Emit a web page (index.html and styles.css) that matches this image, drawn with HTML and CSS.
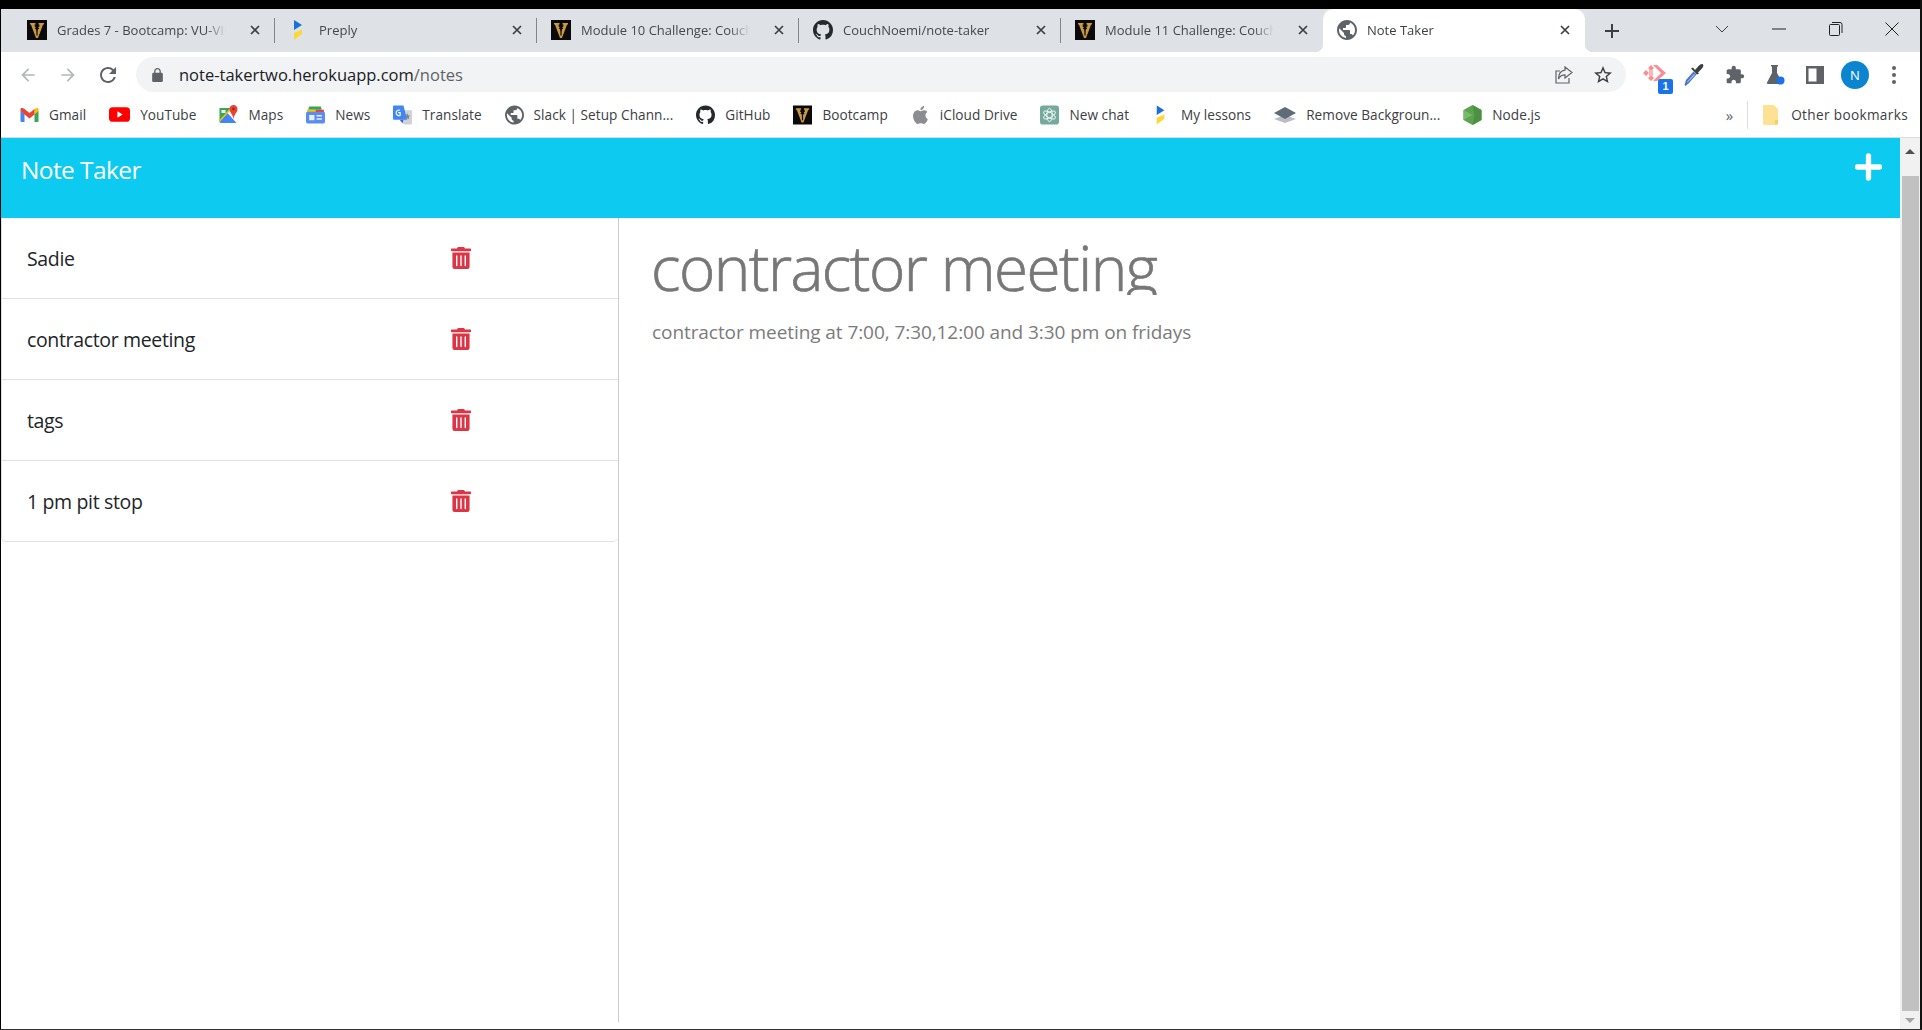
FILE: index.html
```html
<!DOCTYPE html>
<html lang="en">
<head>
<meta charset="utf-8">
<title>Note Taker</title>
<link rel="stylesheet" href="styles.css">
</head>
<body>
<svg class="sprite" xmlns="http://www.w3.org/2000/svg">
  <symbol id="i-v" viewBox="0 0 20 20"><rect width="20" height="20" fill="#0a0a0a"/><path d="M3 3h5.500v1.400H7.600L10 12l2.400-7.600h-.9V3H17v1.400h-.9L11 18H9L3.900 4.400H3z" fill="#c9983f"/><path d="M9.400 2.500h1.200v13h-1.200zM7.500 5.500h5v1h-5zM8 8h4v1H8z" fill="#0a0a0a"/></symbol>
  <symbol id="i-preply" viewBox="0 0 20 20"><path d="M5 0l8 5-8 5z" fill="#1a6fd8"/><path d="M13 9.500V14l-8 6v-7z" fill="#fdd835"/></symbol>
  <symbol id="i-gh" viewBox="0 0 16 16"><path fill="#24292e" d="M8 0C3.580 0 0 3.580 0 8c0 3.540 2.290 6.530 5.470 7.590.4.07.55-.17.55-.38 0-.19-.01-.82-.01-1.490-2.010.37-2.530-.49-2.690-.94-.09-.23-.48-.94-.82-1.130-.28-.15-.68-.52-.01-.53.63-.01 1.080.58 1.230.82.72 1.210 1.870.87 2.330.66.07-.52.28-.87.51-1.070-1.780-.2-3.640-.89-3.640-3.950 0-.87.31-1.590.82-2.150-.08-.2-.36-1.020.08-2.120 0 0 .67-.21 2.200.82.64-.18 1.320-.27 2-.27.68 0 1.360.09 2 .27 1.530-1.040 2.200-.82 2.200-.82.44 1.100.16 1.920.08 2.120.51.56.82 1.270.82 2.150 0 3.070-1.870 3.750-3.650 3.950.29.25.54.73.54 1.480 0 1.070-.01 1.930-.01 2.200 0 .21.15.46.55.38A8.013 8.013 0 0016 8c0-4.420-3.580-8-8-8z"/></symbol>
  <symbol id="i-globe" viewBox="2 2 20 20"><circle cx="12" cy="12" r="10" fill="#fff"/><path fill="#5f6368" d="M12 2C6.480 2 2 6.480 2 12s4.480 10 10 10 10-4.480 10-10S17.520 2 12 2zm-1 17.930c-3.950-.49-7-3.850-7-7.930 0-.62.08-1.210.21-1.790L9 15v1c0 1.100.9 2 2 2v1.930zm6.900-2.540c-.26-.81-1-1.390-1.900-1.390h-1v-3c0-.55-.45-1-1-1H8v-2h2c.55 0 1-.45 1-1V7h2c1.100 0 2-.9 2-2v-.41c2.930 1.190 5 4.060 5 7.410 0 2.080-.8 3.970-2.100 5.390z"/></symbol>
  <symbol id="i-x" viewBox="0 0 10 10"><path d="M1 1l8 8M9 1L1 9" stroke="#3c4043" stroke-width="1.700" fill="none"/></symbol>
  <symbol id="i-gmail" viewBox="0 0 18 14"><path d="M0 2.500V13a1 1 0 001 1h3V6z" fill="#4285f4"/><path d="M18 2.500V13a1 1 0 01-1 1h-3V6z" fill="#34a853"/><path d="M14 1l2-.9A1.300 1.300 0 0118 1.300v1.500L14 6.500z" fill="#fbbc04"/><path d="M4 6.500L0 2.800V1.300A1.300 1.300 0 012 .1L4 1l5 4 5-4v5.500l-5 4z" fill="#ea4335"/></symbol>
  <symbol id="i-yt" viewBox="0 0 20 14"><rect width="20" height="14" rx="3.500" fill="#f00"/><path d="M8 4l5 3-5 3z" fill="#fff"/></symbol>
  <symbol id="i-maps" viewBox="0 0 18 20"><path d="M0 3h11L0 17z" fill="#34a853"/><path d="M0 17l8-9 9 10H2a2 2 0 01-2-1z" fill="#4285f4"/><path d="M0 17L13 3l-2 0L0 15z" fill="#fbbc04"/><path d="M2 5h4v3H2z" fill="#fff"/><path d="M14 0a4 4 0 014 4.200c0 3-3.500 5-4 10-.5-5-4-7-4-10A4 4 0 0114 0z" fill="#ea4335"/><circle cx="14" cy="4" r="1.400" fill="#a52714"/></symbol>
  <symbol id="i-news" viewBox="0 0 18 18"><path d="M3 1h11l1 3H2z" fill="#34a853"/><path d="M1 4h8v3H1z" fill="#fbbc04"/><path d="M9 4h8v3H9z" fill="#ea4335"/><rect y="6" width="18" height="11" rx="1.500" fill="#5b8df0"/><path d="M3 9h5v5H3zM10 9h5v1.500h-5zM10 12h5v1.500h-5z" fill="#e8eefc"/></symbol>
  <symbol id="i-tr" viewBox="0 0 20 20"><path d="M8 5h11a1 1 0 011 1v13a1 1 0 01-1 1H11z" fill="#cfd3d8"/><path d="M1 0h10l4 15H1a1 1 0 01-1-1V1a1 1 0 011-1z" fill="#4285f4"/><path d="M11 15l-1 4-3-4z" fill="#3367d6"/><path d="M7.500 5a3 3 0 100 5.500V7.500H5.500" fill="none" stroke="#fff" stroke-width="1.200"/><path d="M15 8l1 2.400 2.400.2-1.800 1.600.6 2.400L15 13.300l-2.200 1.300.6-2.400-1.800-1.600 2.400-.2z" fill="#7c8794"/></symbol>
  <symbol id="i-apple" viewBox="3 1 18 22"><path fill="#8b8d90" d="M18.710 19.500c-.83 1.240-1.710 2.450-3.050 2.470-1.340.03-1.770-.79-3.290-.79-1.530 0-2 .77-3.270.82-1.310.05-2.300-1.320-3.140-2.530C4.250 17 2.940 12.450 4.700 9.390c.87-1.520 2.430-2.480 4.120-2.510 1.280-.02 2.500.87 3.290.87.78 0 2.260-1.070 3.800-.91.65.03 2.470.26 3.640 1.980-.09.06-2.170 1.280-2.150 3.810.03 3.020 2.650 4.030 2.680 4.040-.03.07-.42 1.440-1.380 2.830M13 3.500c.73-.83 1.940-1.460 2.940-1.500.13 1.170-.34 2.350-1.040 3.190-.69.85-1.830 1.510-2.950 1.420-.15-1.150.41-2.350 1.050-3.110z"/></symbol>
  <symbol id="i-gpt" viewBox="0 0 20 20"><rect width="20" height="20" rx="3" fill="#74aa9c"/><g fill="none" stroke="#fff" stroke-width=".9"><ellipse cx="10" cy="10" rx="2.800" ry="7"/><ellipse cx="10" cy="10" rx="2.800" ry="7" transform="rotate(60 10 10)"/><ellipse cx="10" cy="10" rx="2.800" ry="7" transform="rotate(120 10 10)"/></g></symbol>
  <symbol id="i-layers" viewBox="0 0 22 16"><path d="M11 8l11 4-11 4L0 12z" fill="#b9bdc2"/><path d="M11 0l11 6-11 6L0 6z" fill="#5f6b78"/></symbol>
  <symbol id="i-node" viewBox="0 0 18 20"><path d="M9 0l9 5v10l-9 5-9-5V5z" fill="#5ba34f"/><path d="M9 0l9 5v10l-9 5 2-10z" fill="#4c9142"/><path d="M0 5l9 5-9 5z" fill="#78bb6b"/></symbol>
  <symbol id="i-trash" viewBox="0 0 448 512" preserveAspectRatio="none"><path fill="#dc3545" d="M32 464a48 48 0 0 0 48 48h288a48 48 0 0 0 48-48V128H32zm272-256a16 16 0 0 1 32 0v224a16 16 0 0 1-32 0zm-96 0a16 16 0 0 1 32 0v224a16 16 0 0 1-32 0zm-96 0a16 16 0 0 1 32 0v224a16 16 0 0 1-32 0zM432 32H312l-9.400-18.700A24 24 0 0 0 281.100 0H166.800a23.720 23.720 0 0 0-21.400 13.300L136 32H16A16 16 0 0 0 0 48v32a16 16 0 0 0 16 16h416a16 16 0 0 0 16-16V48a16 16 0 0 0-16-16z"/></symbol>
</svg>

<div class="window">
  <div class="tabstrip">
    <div class="tab"><svg class="fav"><use href="#i-v"/></svg><span class="tab-title">Grades 7 - Bootcamp: VU-VIRT-FSF</span><svg class="tab-x"><use href="#i-x"/></svg></div>
    <div class="tab"><svg class="fav"><use href="#i-preply"/></svg><span class="tab-title">Preply</span><svg class="tab-x"><use href="#i-x"/></svg></div>
    <div class="tab"><svg class="fav"><use href="#i-v"/></svg><span class="tab-title">Module 10 Challenge: Couch</span><svg class="tab-x"><use href="#i-x"/></svg></div>
    <div class="tab"><svg class="fav"><use href="#i-gh"/></svg><span class="tab-title">CouchNoemi/note-taker</span><svg class="tab-x"><use href="#i-x"/></svg></div>
    <div class="tab tab-before-active"><svg class="fav"><use href="#i-v"/></svg><span class="tab-title">Module 11 Challenge: Couch</span><svg class="tab-x"><use href="#i-x"/></svg></div>
    <div class="tab tab-active"><svg class="fav"><use href="#i-globe"/></svg><span class="tab-title">Note Taker</span><svg class="tab-x"><use href="#i-x"/></svg></div>
    <svg class="newtab" viewBox="0 0 16 16"><path d="M8 1v14M1 8h14" stroke="#3c4043" stroke-width="2"/></svg>
    <div class="win-controls">
      <div class="win-btn"><svg viewBox="0 0 14 8" class="win-chev"><path d="M1 1l6 6 6-6" fill="none" stroke="#3c4043"/></svg></div>
      <div class="win-btn"><svg viewBox="0 0 14 14" class="win-ico"><path d="M0 7h14" stroke="#222" stroke-width="1"/></svg></div>
      <div class="win-btn"><svg viewBox="0 0 14 14" class="win-ico"><path d="M.5 3.500a1 1 0 011-1h8a1 1 0 011 1v9a1 1 0 01-1 1h-8a1 1 0 01-1-1zM3 .5h8a2 2 0 012 2V11" fill="none" stroke="#222"/></svg></div>
      <div class="win-btn win-close"><svg viewBox="0 0 14 14" class="win-ico"><path d="M.5.500l13 13M13.500.5l-13 13" stroke="#222"/></svg></div>
    </div>
  </div>

  <div class="toolbar">
    <button class="tool"><svg viewBox="0 0 24 24" class="ico20 dim"><path d="M20 11H7.830l5.590-5.590L12 4l-8 8 8 8 1.410-1.410L7.830 13H20v-2z"/></svg></button>
    <button class="tool"><svg viewBox="0 0 24 24" class="ico20 dim"><path d="M12 4l-1.410 1.410L16.170 11H4v2h12.170l-5.580 5.590L12 20l8-8z"/></svg></button>
    <button class="tool"><svg viewBox="0 0 24 24" class="ico24"><path d="M17.650 6.350A7.958 7.958 0 0 0 12 4c-4.420 0-7.990 3.580-7.990 8s3.570 8 7.990 8c3.730 0 6.840-2.550 7.730-6h-2.080A5.990 5.990 0 0 1 12 18c-3.310 0-6-2.690-6-6s2.690-6 6-6c1.660 0 3.140.69 4.220 1.780L13 11h7V4l-2.350 2.350z"/></svg></button>
    <div class="omnibox">
      <svg viewBox="4 1 16 21" class="lock"><path d="M18 8h-1V6c0-2.760-2.240-5-5-5S7 3.240 7 6v2H6c-1.100 0-2 .9-2 2v10c0 1.100.9 2 2 2h12c1.100 0 2-.9 2-2V10c0-1.100-.9-2-2-2zM9 6c0-1.660 1.340-3 3-3s3 1.340 3 3v2H9V6z"/></svg>
      <span class="url">note-takertwo.herokuapp.com<span class="url-path">/notes</span></span>
      <svg viewBox="0 0 20 20" class="share"><path d="M11 2l7 5.500L11 13V9.800C7.500 9.800 5.500 11.500 4.500 14c0-5 2.500-8.300 6.500-8.800zM15 13v5H2V6h4" fill="none" stroke="#5f6368" stroke-width="1.200"/></svg>
      <svg viewBox="2 2 20 20" class="star"><path d="M22 9.240l-7.190-.62L12 2 9.190 8.630 2 9.240l5.460 4.730L5.820 21 12 17.270 18.180 21l-1.630-7.030L22 9.240zM12 15.400l-3.760 2.270 1-4.280-3.320-2.880 4.380-.38L12 6.100l1.710 4.040 4.380.38-3.320 2.880 1 4.280L12 15.400z"/></svg>
    </div>
    <div class="ext ext-first">
      <svg viewBox="0 0 24 20" class="ext-svg"><path d="M0 9l3-3 3 3-3 3zM5 4l3-3 3 3-3 3zM5 14l3-3 3 3-3 3z" fill="#f98d93"/><path d="M10 1h4l9 8-9 8h-4l8-8z" fill="#f98d93"/><path d="M6 6h4v6H6z" fill="#fbb6ba"/></svg>
      <span class="badge">1</span>
    </div>
    <div class="ext ext-dropper"><svg viewBox="0 0 20 24" class="drop"><path d="M1.500 23L.5 22l1.500-5 7.500-8.500 3 3L5 20z" fill="#4a76c9"/><path d="M3.500 19.500L3 19l7-8 1 1z" fill="#a9c2ee"/><path d="M11 7l3.500-4C16 1.500 18 .5 19 1.500s0 3-1.500 4.500L14 9.500l1 1-2 1-6-6 2-1z" fill="#3c4043"/></svg></div>
    <div class="ext ext-puzzle"><svg viewBox="0 0 24 24" class="ico20"><path d="M20.500 11H19V7c0-1.100-.9-2-2-2h-4V3.500C13 2.120 11.880 1 10.500 1S8 2.120 8 3.500V5H4c-1.100 0-1.990.9-1.990 2v3.800H3.500c1.490 0 2.700 1.210 2.700 2.700s-1.210 2.700-2.700 2.700H2V20c0 1.100.9 2 2 2h3.800v-1.500c0-1.490 1.210-2.700 2.700-2.700 1.490 0 2.700 1.210 2.700 2.700V22H17c1.100 0 2-.9 2-2v-4h1.500c1.380 0 2.500-1.120 2.500-2.500S21.880 11 20.500 11z"/></svg></div>
    <div class="ext"><svg viewBox="0 0 20 20" class="ico20"><path d="M6 0h7v1.500h-1V8l5 9a1 1 0 01-1 2H3a1 1 0 01-1-1.500L7 8V1.500H6z"/><circle cx="15.500" cy="15.500" r="4" fill="#1a73e8"/></svg></div>
    <div class="ext"><svg viewBox="0 0 18 18" class="side"><path d="M0 0h18v18H0z" fill="#5f6368"/><path d="M2.500 2.500h8v13h-8z" fill="#fff"/></svg></div>
    <div class="ext"><span class="avatar">N</span></div>
    <div class="ext ext-dots"><svg viewBox="0 0 4 18" class="dots"><circle cx="2" cy="2" r="2"/><circle cx="2" cy="9" r="2"/><circle cx="2" cy="16" r="2"/></svg></div>
  </div>

  <div class="bookmarks">
    <a class="bm"><svg class="bm-ico bm-gmail"><use href="#i-gmail"/></svg>Gmail</a>
    <a class="bm"><svg class="bm-ico bm-yt"><use href="#i-yt"/></svg>YouTube</a>
    <a class="bm"><svg class="bm-ico"><use href="#i-maps"/></svg>Maps</a>
    <a class="bm"><svg class="bm-ico"><use href="#i-news"/></svg>News</a>
    <a class="bm"><svg class="bm-ico"><use href="#i-tr"/></svg>Translate</a>
    <a class="bm"><svg class="bm-ico"><use href="#i-globe"/></svg>Slack | Setup Chann...</a>
    <a class="bm"><svg class="bm-ico"><use href="#i-gh"/></svg>GitHub</a>
    <a class="bm"><svg class="bm-ico"><use href="#i-v"/></svg>Bootcamp</a>
    <a class="bm"><svg class="bm-ico"><use href="#i-apple"/></svg>iCloud Drive</a>
    <a class="bm"><svg class="bm-ico"><use href="#i-gpt"/></svg>New chat</a>
    <a class="bm"><svg class="bm-ico"><use href="#i-preply"/></svg>My lessons</a>
    <a class="bm"><svg class="bm-ico bm-layers"><use href="#i-layers"/></svg>Remove Backgroun...</a>
    <a class="bm"><svg class="bm-ico"><use href="#i-node"/></svg>Node.js</a>
    <span class="bm-more">»</span>
    <span class="bm-sep"></span>
    <a class="bm bm-other"><svg viewBox="0 0 16 20" class="bm-folder"><path d="M1 0h10l4 4v15a1 1 0 01-1 1H1a1 1 0 01-1-1V1a1 1 0 011-1z" fill="#fde293"/><path d="M12 15h3v4h-3z" fill="#f9cf5b"/></svg>Other bookmarks</a>
  </div>

  <div class="viewport">
    <div class="page">
      <header class="app-header">
        <h1 class="app-title">Note Taker</h1>
        <svg viewBox="0 0 28 28" class="plus"><path d="M14 2.500v23M2.500 14h23" stroke="#fff" stroke-width="5.500" stroke-linecap="round"/></svg>
      </header>
      <div class="app-body">
        <aside class="sidebar">
          <ul class="note-list">
            <li class="note"><span>Sadie</span><svg class="trash"><use href="#i-trash"/></svg></li>
            <li class="note"><span>contractor meeting</span><svg class="trash"><use href="#i-trash"/></svg></li>
            <li class="note"><span>tags</span><svg class="trash"><use href="#i-trash"/></svg></li>
            <li class="note"><span>1 pm pit stop</span><svg class="trash"><use href="#i-trash"/></svg></li>
          </ul>
        </aside>
        <main class="editor">
          <div class="note-heading">contractor meeting</div>
          <p class="note-text">contractor meeting at 7:00, 7:30,12:00 and 3:30 pm on fridays</p>
        </main>
      </div>
    </div>
    <div class="scrollbar">
      <span class="arrow-up"></span>
      <span class="thumb"></span>
      <span class="arrow-down"></span>
    </div>
  </div>
</div>
</body>
</html>
```

FILE: styles.css
```css
* { box-sizing: border-box; }
html, body { margin: 0; height: 100%; overflow: hidden; background: #000; }
body { font-family: "Open Sans", "Liberation Sans", sans-serif; }
.sprite { display: none; }
svg { display: block; }

.window {
  width: 1922px;
  height: 1030px;
  padding-top: 9px;
  background: #000;
  border-left: 1px solid #000;
  border-right: 2px solid #111;
  border-bottom: 1px solid #333;
  display: flex;
  flex-direction: column;
}

/* Tab strip */
.tabstrip {
  height: 43px;
  flex: none;
  background: #dee1e6;
  display: flex;
  align-items: stretch;
  padding-left: 12px;
}
.tab {
  width: 262px;
  flex: none;
  display: flex;
  align-items: center;
  position: relative;
  padding: 0 15px 1px 14px;
  gap: 10px;
  font-size: 13px;
  color: #45494e;
}
.tab::after {
  content: "";
  position: absolute;
  right: 0;
  top: 9px;
  height: 25px;
  width: 1px;
  background: #80868b;
}
.tab-before-active::after, .tab-active::after { display: none; }
.fav { width: 20px; height: 20px; flex: none; }
.tab-title {
  flex: 1;
  min-width: 0;
  white-space: nowrap;
  overflow: hidden;
  -webkit-mask-image: linear-gradient(90deg, #000 88%, transparent 100%);
  mask-image: linear-gradient(90deg, #000 88%, transparent 100%);
  margin-right: 14px;
}
.tab-x { width: 10px; height: 10px; flex: none; }
.tab-active {
  background: #fff;
  border-radius: 10px 10px 0 0;
  color: #3c4043;
}
.tab-active::before {
  content: "";
  position: absolute;
  left: -8px;
  bottom: 0;
  width: 8px;
  height: 8px;
  background: radial-gradient(circle at 0 0, transparent 8px, #fff 8.500px);
}
.tab-active::after {
  display: block;
  right: -8px;
  top: auto;
  bottom: 0;
  width: 8px;
  height: 8px;
  background: radial-gradient(circle at 100% 0, transparent 8px, #fff 8.500px);
}
.newtab { width: 16px; height: 16px; align-self: center; margin-left: 19px; flex: none; }
.win-controls { margin-left: auto; display: flex; height: 100%; }
.win-btn { width: 57px; display: flex; align-items: flex-start; justify-content: center; padding-top: 13px; }
.win-close { width: 56px; }
.win-ico { width: 14px; height: 14px; }
.win-chev { width: 14px; height: 8px; margin-top: 3px; }

/* Toolbar */
.toolbar {
  height: 43px;
  flex: none;
  background: #fff;
  display: flex;
  align-items: flex-start;
  padding: 5px 0 0 7px;
}
.tool {
  width: 40px;
  height: 35px;
  padding: 0;
  border: 0;
  background: none;
  display: flex;
  align-items: center;
  justify-content: center;
}
.ico20 { width: 20px; height: 20px; fill: #5f6368; }
.ico24 { width: 24px; height: 24px; fill: #5f6368; }
.dim { fill: #b4b7ba; }
.omnibox {
  width: 1490px;
  height: 35px;
  margin-left: 8px;
  background: #f1f3f4;
  border-radius: 18px;
  display: flex;
  align-items: center;
  padding: 0 14px 0 16px;
}
.lock { width: 11px; height: 14px; fill: #5f6368; flex: none; }
.url { margin-left: 16px; font-size: 16.500px; color: #202124; flex: 1; white-space: nowrap; }
.url-path { color: #5f6368; }
.share { width: 20px; height: 20px; flex: none; }
.star { width: 18px; height: 18px; fill: #3c4043; flex: none; margin-left: 20px; }
.ext { width: 40px; height: 35px; flex: none; display: flex; align-items: center; justify-content: center; position: relative; }
.ext-first { width: 36px; margin-left: 14px; }
.ext-dropper { width: 36px; }
.ext-puzzle { margin-left: 3px; }
.ext-dots { width: 37px; }
.ext-svg { width: 24px; height: 20px; margin: 0 6px 2px 0; }
.badge {
  position: absolute;
  right: 3px;
  bottom: -2px;
  width: 15px;
  height: 15px;
  background: #1a73e8;
  border-radius: 2px;
  color: #fff;
  font: 700 11px/15px "Liberation Sans", sans-serif;
  text-align: center;
}
.drop { width: 20px; height: 24px; }
.side { width: 18px; height: 18px; }
.avatar {
  width: 28px;
  height: 28px;
  border-radius: 50%;
  background: #0b85d0;
  color: #fff;
  font-size: 13px;
  line-height: 28px;
  text-align: center;
}
.dots { width: 4px; height: 18px; fill: #5f6368; }

/* Bookmarks */
.bookmarks {
  height: 43px;
  flex: none;
  background: #fff;
  display: flex;
  align-items: center;
  padding: 0 0 3px 19px;
  gap: 23px;
  border-bottom: 1px solid #dadce0;
  font-size: 13.600px;
  letter-spacing: 0.05px;
  color: #3c4043;
  white-space: nowrap;
}
.bm { display: flex; align-items: center; gap: 10px; }
.bm-ico { width: 19px; height: 20px; flex: none; }
.bm-gmail { height: 14px; }
.bm-yt { width: 21px; height: 15px; }
.bm-layers { width: 22px; height: 16px; }
.bm-more { margin-left: auto; font-size: 15px; color: #5f6368; }
.bm-sep { width: 1px; height: 28px; background: #dadce0; margin-left: -9px; }
.bm-folder { width: 16px; height: 20px; flex: none; }
.bm-other { margin-left: -8px; gap: 12px; padding-right: 12px; letter-spacing: 0.35px; }

/* Page */
.viewport { flex: 1; min-height: 0; display: flex; background: #fff; }
.page { flex: 1; min-width: 0; display: flex; flex-direction: column; padding-bottom: 7px; }
.app-header {
  height: 80px;
  flex: none;
  background: #0dcaf0;
  display: flex;
  align-items: flex-start;
  justify-content: space-between;
  padding: 14px 18px 0 20px;
}
.app-title { margin: 0; font-size: 24.500px; font-weight: 400; line-height: 36px; letter-spacing: -0.6px; color: #fff; }
.plus { width: 27px; height: 28px; margin-top: 1px; }
.app-body { flex: 1; min-height: 0; display: flex; }
.sidebar { width: 618px; flex: none; border-right: 1px solid #ccc; }
.note-list { list-style: none; margin: 0; padding: 0; border-radius: 0 0 5px 5px; }
.note {
  height: 81px;
  border: 1px solid #dee2e6;
  border-top: 0;
  border-right: 0;
  padding: 0 0 0 25px;
  display: flex;
  align-items: center;
  font-size: 19.500px;
  letter-spacing: -0.35px;
  color: #212529;
  position: relative;
}
.note:last-child { border-radius: 0 0 5px 5px; }
.note span { width: 424px; flex: none; }
.trash { width: 20px; height: 22px; margin-bottom: 1px; flex: none; }
.editor { flex: 1; min-width: 0; padding: 0 0 0 32px; color: #777; }
.note-heading {
  height: 77px;
  overflow: hidden;
  font-size: 62px;
  font-weight: 300;
  -webkit-text-stroke: 0.7px #777;
  line-height: 98px;
  letter-spacing: -1.55px;
  white-space: nowrap;
}
.note-text { margin: 23px 0 0 1px; font-size: 19px; line-height: 28px; letter-spacing: -0.07px; color: #7b7b7b; }

/* Scrollbar */
.scrollbar {
  width: 20px;
  flex: none;
  background: #f1f1f1;
  display: flex;
  flex-direction: column;
  align-items: center;
}
.arrow-up {
  flex: none;
  margin-top: 11px;
  border: 5px solid transparent;
  border-top: 0;
  border-bottom: 5px solid #505050;
}
.thumb { width: 17px; flex: 1; background: #c1c1c1; margin: 22px 0 2px; }
.arrow-down {
  flex: none;
  margin: 5px 0 6px;
  border: 5px solid transparent;
  border-bottom: 0;
  border-top: 5px solid #a3a3a3;
}
```
